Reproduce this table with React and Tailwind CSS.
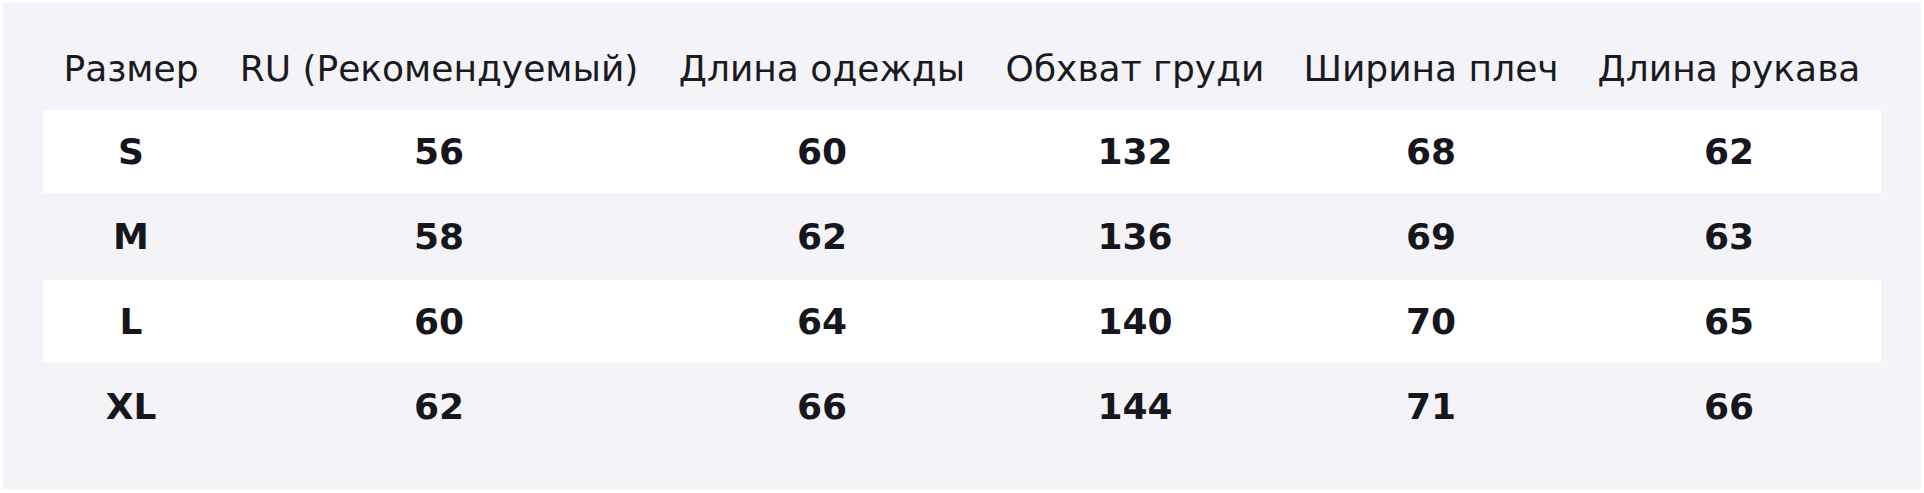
import React from 'react';

const headers = ['Размер', 'RU (Рекомендуемый)', 'Длина одежды', 'Обхват груди', 'Ширина плеч', 'Длина рукава'];

const rows = [
  ['S', '56', '60', '132', '68', '62'],
  ['M', '58', '62', '136', '69', '63'],
  ['L', '60', '64', '140', '70', '65'],
  ['XL', '62', '66', '144', '71', '66'],
];

const App = () => {
  return (
    <div className="bg-white p-[3px]" style={{ fontFamily: '"DejaVu Sans", sans-serif' }}>
      <div className="bg-[#f4f4f8] px-10 pt-10 pb-[39px]">
        <table className="w-full table-fixed border-separate border-spacing-0 text-[#16161d]">
          <colgroup>
            <col className="w-[176px]" />
            <col className="w-[440px]" />
            <col className="w-[326px]" />
            <col className="w-[300px]" />
            <col className="w-[292px]" />
            <col className="w-[304px]" />
          </colgroup>
          <thead>
            <tr>
              {headers.map(h => (
                <th key={h} className="pt-0 pb-4 text-[36px] leading-[51px] font-normal text-center whitespace-nowrap text-[#1a1a1f]">
                  {h}
                </th>
              ))}
            </tr>
          </thead>
          <tbody>
            {rows.map((row, i) => (
              <tr key={row[0]}>
                {row.map((cell, j) => (
                  <td
                    key={j}
                    className={`py-4 text-[36px] leading-[51px] font-bold text-center border-b-2 border-transparent bg-clip-padding ${i % 2 === 0 ? 'bg-white' : 'bg-transparent'}`}
                  >
                    {cell}
                  </td>
                ))}
              </tr>
            ))}
          </tbody>
        </table>
      </div>
    </div>
  );
};

export default App;
